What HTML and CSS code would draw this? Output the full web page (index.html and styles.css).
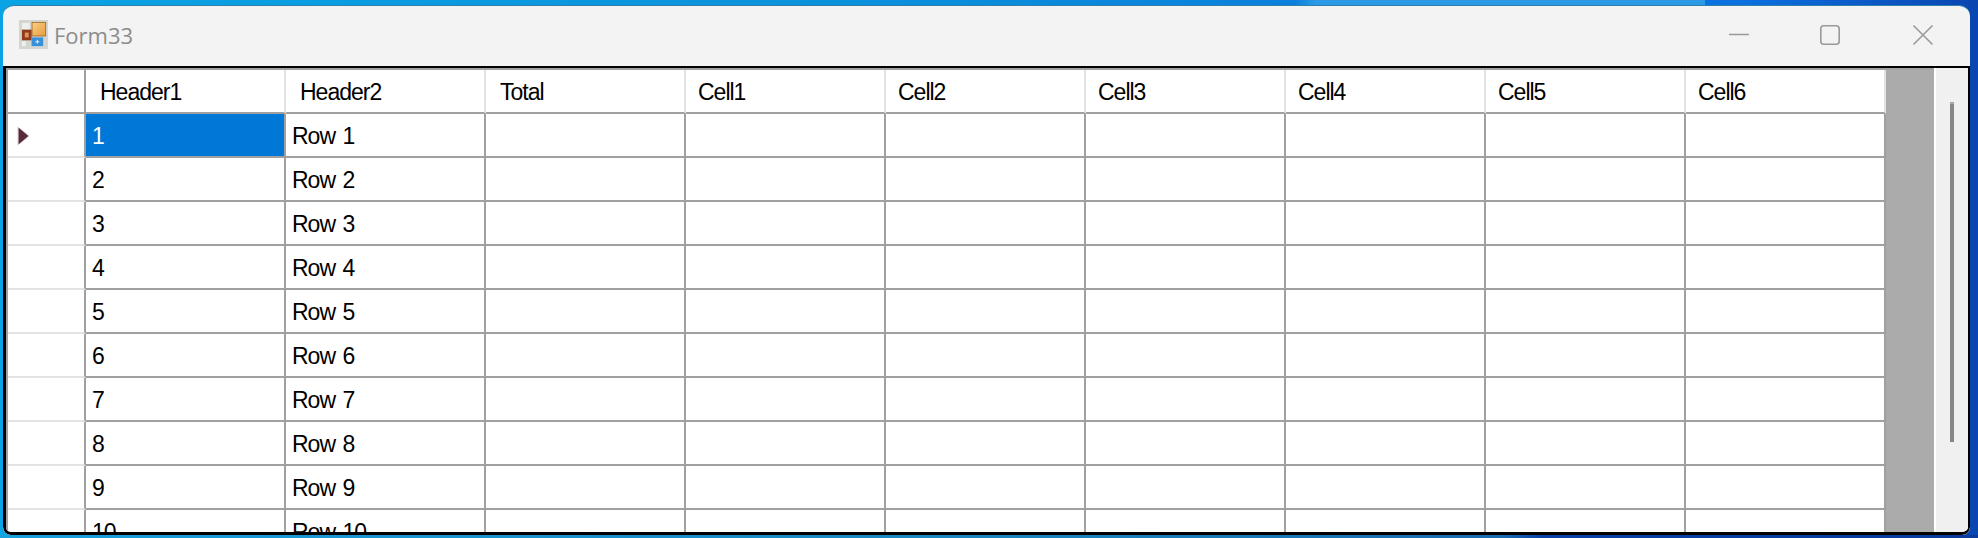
FILE: index.html
```html
<!DOCTYPE html>
<html lang="en">

<head>
    <meta charset="UTF-8">
    <title>Form33</title>
    <link rel="stylesheet" href="styles.css">
</head>

<body>
    <div class="window">
        <div class="titlebar">
            <svg class="appicon" width="29" height="29" viewBox="0 0 30 30">
                <defs>
                    <linearGradient id="orange" x1="0" y1="0" x2="1" y2="1">
                        <stop offset="0" stop-color="#f9cf86" />
                        <stop offset="1" stop-color="#ea9c3c" />
                    </linearGradient>
                </defs>
                <rect x="0" y="0" width="30" height="30" fill="#d3d6d0" />
                <rect x="3" y="3" width="8" height="7" fill="#eef0ee" />
                <rect x="3" y="22" width="4" height="5" fill="#eef0ee" />
                <rect x="13" y="2" width="15" height="15" fill="#a9752f" />
                <rect x="14" y="3" width="13" height="13" fill="url(#orange)" />
                <rect x="3" y="10" width="10" height="11" fill="#93391c" />
                <rect x="6" y="13" width="4" height="5" fill="#d89a5c" />
                <rect x="13" y="18" width="12" height="9" fill="#3a90d8" />
                <path d="M17 22.5h4M19 20.5v4" stroke="#e6f4ff" stroke-width="1" fill="none" />
            </svg>
            <span class="title">Form33</span>
            <div class="controls">
                <div class="ctl">
                    <svg width="22" height="22" viewBox="0 0 22 22">
                        <path d="M1 10.5h20" stroke="#999" stroke-width="1.6" fill="none" />
                    </svg>
                </div>
                <div class="ctl ctl-max">
                    <svg width="22" height="22" viewBox="0 0 22 22">
                        <rect x="1.8" y="1.8" width="18.4" height="18.4" rx="3" stroke="#999" stroke-width="1.6" fill="none" />
                    </svg>
                </div>
                <div class="ctl">
                    <svg width="22" height="22" viewBox="0 0 22 22">
                        <path d="M1.5 1.5l19 19M20.5 1.5l-19 19" stroke="#999" stroke-width="1.6" fill="none" />
                    </svg>
                </div>
            </div>
        </div>

        <div class="client">
            <div class="gridview">
                <div class="row">
                    <div class="rowhead headrow"></div>
                    <div class="cell hcell">Header1</div>
                    <div class="cell hcell">Header2</div>
                    <div class="cell hcell">Total</div>
                    <div class="cell hcell hcell-c">Cell1</div>
                    <div class="cell hcell hcell-c">Cell2</div>
                    <div class="cell hcell hcell-c">Cell3</div>
                    <div class="cell hcell hcell-c">Cell4</div>
                    <div class="cell hcell hcell-c">Cell5</div>
                    <div class="cell hcell hcell-c">Cell6</div>
                </div>
                <div class="row">
                    <div class="rowhead">
                        <svg class="arrow" width="14" height="20" viewBox="0 0 14 20">
                            <path d="M0 0L13 10L0 20z" fill="#eee8ea" />
                            <path d="M1.5 1.5L11.5 10L1.5 18.5z" fill="#5b2a3a" />
                        </svg>
                    </div>
                    <div class="cell selected">1</div>
                    <div class="cell">Row 1</div>
                    <div class="cell"></div><div class="cell"></div><div class="cell"></div><div class="cell"></div><div class="cell"></div><div class="cell"></div><div class="cell"></div>
                </div>
                <div class="row">
                    <div class="rowhead"></div>
                    <div class="cell">2</div>
                    <div class="cell">Row 2</div>
                    <div class="cell"></div><div class="cell"></div><div class="cell"></div><div class="cell"></div><div class="cell"></div><div class="cell"></div><div class="cell"></div>
                </div>
                <div class="row">
                    <div class="rowhead"></div>
                    <div class="cell">3</div>
                    <div class="cell">Row 3</div>
                    <div class="cell"></div><div class="cell"></div><div class="cell"></div><div class="cell"></div><div class="cell"></div><div class="cell"></div><div class="cell"></div>
                </div>
                <div class="row">
                    <div class="rowhead"></div>
                    <div class="cell">4</div>
                    <div class="cell">Row 4</div>
                    <div class="cell"></div><div class="cell"></div><div class="cell"></div><div class="cell"></div><div class="cell"></div><div class="cell"></div><div class="cell"></div>
                </div>
                <div class="row">
                    <div class="rowhead"></div>
                    <div class="cell">5</div>
                    <div class="cell">Row 5</div>
                    <div class="cell"></div><div class="cell"></div><div class="cell"></div><div class="cell"></div><div class="cell"></div><div class="cell"></div><div class="cell"></div>
                </div>
                <div class="row">
                    <div class="rowhead"></div>
                    <div class="cell">6</div>
                    <div class="cell">Row 6</div>
                    <div class="cell"></div><div class="cell"></div><div class="cell"></div><div class="cell"></div><div class="cell"></div><div class="cell"></div><div class="cell"></div>
                </div>
                <div class="row">
                    <div class="rowhead"></div>
                    <div class="cell">7</div>
                    <div class="cell">Row 7</div>
                    <div class="cell"></div><div class="cell"></div><div class="cell"></div><div class="cell"></div><div class="cell"></div><div class="cell"></div><div class="cell"></div>
                </div>
                <div class="row">
                    <div class="rowhead"></div>
                    <div class="cell">8</div>
                    <div class="cell">Row 8</div>
                    <div class="cell"></div><div class="cell"></div><div class="cell"></div><div class="cell"></div><div class="cell"></div><div class="cell"></div><div class="cell"></div>
                </div>
                <div class="row">
                    <div class="rowhead"></div>
                    <div class="cell">9</div>
                    <div class="cell">Row 9</div>
                    <div class="cell"></div><div class="cell"></div><div class="cell"></div><div class="cell"></div><div class="cell"></div><div class="cell"></div><div class="cell"></div>
                </div>
                <div class="row">
                    <div class="rowhead"></div>
                    <div class="cell">10</div>
                    <div class="cell">Row 10</div>
                    <div class="cell"></div><div class="cell"></div><div class="cell"></div><div class="cell"></div><div class="cell"></div><div class="cell"></div><div class="cell"></div>
                </div>
            </div>
            <div class="scrollbar">
                <div class="thumb"></div>
            </div>
        </div>
    </div>
</body>

</html>
```

FILE: styles.css
```css
html {
    height: 100%;
}

body {
    box-sizing: border-box;
    height: 538px;
    margin: 0;
    padding: 5px 8px 3px 3px;
    overflow: hidden;
    font-family: "Liberation Sans", Arial, sans-serif;
    background-color: #0a6fd0;
    background-image:
        linear-gradient(100deg, transparent 20px, #2a9ae6 40px),
        linear-gradient(90deg, #18a0dc 0%, #1a86c0 50%, #1a6cb0 76%, #0a40a8 78%, #0a3a9c 100%),
        linear-gradient(90deg, #0aa4e4 0%, #0a90dc 45%, #0a80dc 65%, #0a70e0 88%, #0a45b0 100%);
    background-size: 430px 5px, 100% 3px, 100% 100%;
    background-position: 1275px 0, 0 100%, 0 0;
    background-repeat: no-repeat;
}

.window {
    display: flex;
    flex-direction: column;
    height: 100%;
    background: #f3f3f3;
    border-top: 1px solid #2f7fa8;
    border-radius: 11px 11px 8px 8px;
    box-sizing: border-box;
    overflow: hidden;
}

.titlebar {
    display: flex;
    flex: none;
    align-items: center;
    box-sizing: border-box;
    height: 60px;
    padding: 0 1px 3px 16px;
}

.appicon {
    flex: none;
    margin-right: 6px;
}

.title {
    font-family: "Open Sans", "Noto Sans", sans-serif;
    font-size: 22px;
    color: #8c8c8c;
}

.controls {
    display: flex;
    margin-left: auto;
}

.ctl {
    display: flex;
    align-items: center;
    justify-content: center;
    width: 92px;
}

.ctl-max svg {
    margin-right: 2px;
}

.client {
    display: flex;
    flex: 1;
    min-height: 0;
    border: solid #000;
    border-width: 2px 2px 3px 3px;
    border-radius: 0 0 8px 8px;
    overflow: hidden;
}

.gridview {
    flex: 1;
    min-width: 0;
    overflow: hidden;
    background: #ababab;
    border-top: 2px solid #a0a0a0;
    border-left: 2px solid #a0a0a0;
}

.row {
    display: flex;
    height: 44px;
}

.rowhead {
    display: flex;
    align-items: center;
    flex: none;
    box-sizing: border-box;
    width: 78px;
    padding-left: 9px;
    background: #fff;
    border-right: 2px solid #a0a0a0;
    border-bottom: 2px solid #e3e3e3;
}

.headrow {
    border-bottom-color: #a0a0a0;
}

.arrow {
    margin-top: 2px;
}

.cell {
    flex: none;
    box-sizing: border-box;
    width: 200px;
    padding-left: 6px;
    font-size: 23px;
    letter-spacing: -1px;
    word-spacing: 2px;
    line-height: 44px;
    color: #000;
    background: #fff;
    border-right: 2px solid #a0a0a0;
    border-bottom: 2px solid #a0a0a0;
}

.hcell {
    padding-left: 14px;
    border-right-color: #e3e3e3;
}

.hcell-c {
    padding-left: 12px;
}

.selected {
    color: #fff;
    background: #0078d7;
}

.scrollbar {
    flex: none;
    display: flex;
    justify-content: center;
    width: 32px;
    background: #f0f0f0;
    border-left: 2px solid #fff;
}

.thumb {
    width: 4px;
    height: 340px;
    margin-top: 34px;
    background: #868686;
    border-top: 2px solid #a8a8a8;
    box-sizing: border-box;
}
```
